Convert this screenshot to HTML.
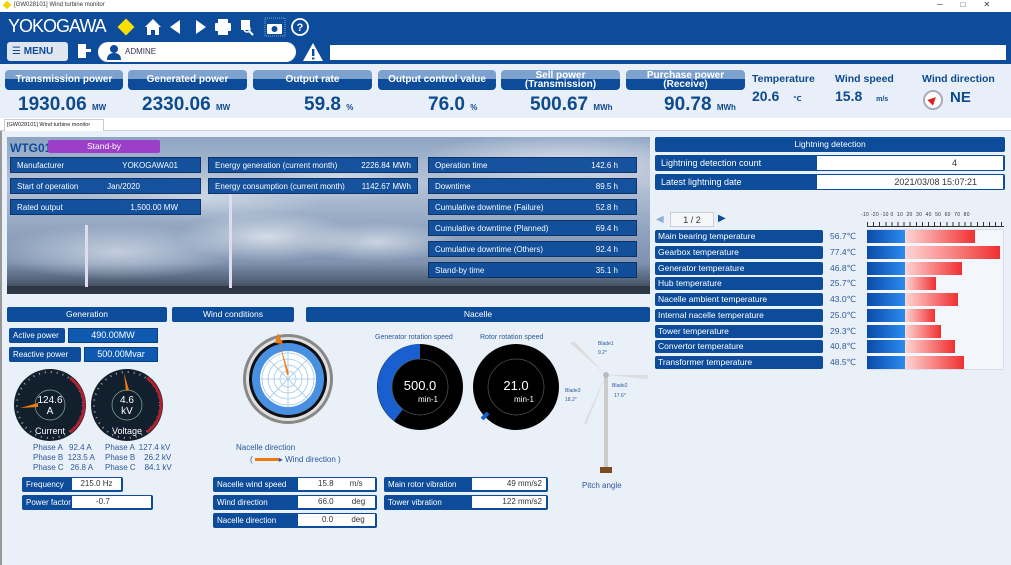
<!DOCTYPE html>
<html><head><meta charset="utf-8"><style>
*{box-sizing:border-box;margin:0;padding:0}
body{width:1011px;height:565px;overflow:hidden;background:#fff;font-family:"Liberation Sans","DejaVu Sans",sans-serif;position:relative;font-size:9px;color:#1a3d7a}
.a{position:absolute}
.hdr{background:#0d4c9a}
.kh{position:absolute;top:70px;height:20px;border-radius:4px;background:linear-gradient(#7ea2cf 0%,#7ea2cf 45%,#0d4c9a 46%);color:#fff;font-weight:bold;font-size:10px;text-align:center;line-height:20px}
.kv{position:absolute;top:94px;font-size:19px;font-weight:bold;color:#0d4a8e;text-align:center}
.kv small{font-size:8px}
.ir{position:absolute;background:#0d4c9a;color:#fff;font-size:8px;height:16px;line-height:16px;padding:0 6px;border:1px solid #082d63;opacity:.95}
.ir span{position:absolute;right:6px}
.sh{position:absolute;height:15px;background:#0d4c9a;color:#fff;font-size:8.5px;text-align:center;line-height:15px;border-radius:2px}
.lr{position:absolute;height:14px;background:#0d4c9a;color:#fff;font-size:8px;line-height:14px;padding-left:4px;border-radius:2px}
.lr b{position:absolute;background:#fff;color:#333;font-weight:normal;top:1px;height:12px;line-height:12px;text-align:center}
.tr{position:absolute;left:655px;width:168px;height:13px;background:#0d4c9a;color:#fff;font-size:8.5px;line-height:13px;padding-left:3px;border-radius:2px}
.tv{position:absolute;left:830px;font-size:8.5px;color:#2c5a99}
.bb{position:absolute;left:867px;width:38px;height:13px;background:linear-gradient(90deg,#0b4aa8,#2a8cf0)}
.rb{position:absolute;left:905px;height:13px;background:linear-gradient(90deg,#ffd6d6,#f03030)}
</style></head><body>
<div class="a" style="left:0;top:0;width:1011px;height:12px;background:#fff;font-size:6px;color:#333;line-height:11px;padding-left:14px">[GW028101] Wind turbine monitor</div>
<div class="a" style="left:4px;top:2px;width:6px;height:6px;background:#f4d400;transform:rotate(45deg)"></div>
<div class="a" style="left:937px;top:0;font-size:8px;color:#333;letter-spacing:18px">─□✕</div>
<div class="a hdr" style="left:0;top:12px;width:1011px;height:52px"></div>
<div class="a" style="left:8px;top:16px;color:#fff;font-size:18px;letter-spacing:-1px">YOKOGAWA</div>
<div class="a" style="left:120px;top:21px;width:12px;height:12px;background:#f8e000;transform:rotate(45deg)"></div>
<svg class="a" style="left:142px;top:16px" width="180" height="22" viewBox="0 0 180 22" fill="#fff">
<path d="M3 11 L11 3 L19 11 L17 11 L17 19 L13 19 L13 14 L9 14 L9 19 L5 19 L5 11Z"/>
<path d="M28 11 L38 4 L38 18Z"/><path d="M54 4 L64 11 L54 18Z"/>
<rect x="76" y="3" width="10" height="4"/><rect x="73" y="7" width="16" height="8" rx="1"/><rect x="76" y="13" width="10" height="6"/>
<rect x="99" y="4" width="9" height="10"/><circle cx="105" cy="13" r="3" fill="none" stroke="#fff" stroke-width="1.5"/><path d="M107 15 L111 19" stroke="#fff" stroke-width="2"/>
<rect x="125" y="8" width="15" height="10" rx="1"/><circle cx="132.5" cy="13" r="3" fill="#0d4c9a"/><rect x="123" y="2" width="20" height="18" fill="none" stroke="#fff" stroke-width=".5" stroke-dasharray="1 1"/>
<circle cx="158" cy="11" r="8" fill="none" stroke="#fff" stroke-width="1.8"/><text x="158" y="15" font-size="11" font-weight="bold" text-anchor="middle" fill="#fff" font-family="Liberation Sans">?</text>
</svg>
<div class="a" style="left:7px;top:42px;width:61px;height:19px;background:#dfe6f0;border-radius:3px;color:#0d4c9a;font-weight:bold;font-size:10px;line-height:19px;padding-left:5px">☰ MENU</div>
<div class="a" style="left:78px;top:44px;width:8px;height:14px;background:#fff"></div><div class="a" style="left:86px;top:49px;width:5px;height:3px;background:#fff"></div>
<div class="a" style="left:98px;top:42px;width:198px;height:20px;background:#fff;border-radius:10px;font-size:8px;color:#335;line-height:20px;padding-left:27px">ADMINE</div>
<svg class="a" style="left:106px;top:44px" width="16" height="16"><circle cx="8" cy="5" r="4" fill="#0d4c9a"/><path d="M1 16 Q1 9 8 9 Q15 9 15 16Z" fill="#0d4c9a"/></svg>
<svg class="a" style="left:302px;top:42px" width="22" height="20"><path d="M11 1 L21 19 L1 19Z" fill="#fff"/><rect x="10" y="7" width="2.4" height="7" fill="#0d4c9a"/><rect x="10" y="15.5" width="2.4" height="2" fill="#0d4c9a"/></svg>
<div class="a" style="left:330px;top:45px;width:676px;height:15px;background:#fff"></div>
<div class="a" style="left:0;top:64px;width:1011px;height:54px;background:#e8eff8"></div>
<div class="kh" style="left:5px;width:118px">Transmission power</div>
<div class="kh" style="left:128px;width:119px">Generated power</div>
<div class="kh" style="left:253px;width:119px">Output rate</div>
<div class="kh" style="left:378px;width:118px">Output control value</div>
<div class="kh" style="left:501px;width:119px;line-height:9px;padding-top:1px">Sell power<br>(Transmission)</div>
<div class="kh" style="left:626px;width:119px;line-height:9px;padding-top:1px">Purchase power<br>(Receive)</div>
<div class="kv" style="left:18px">1930.06 <small>MW</small></div>
<div class="kv" style="left:142px">2330.06 <small>MW</small></div>
<div class="kv" style="left:304px">59.8 <small>%</small></div>
<div class="kv" style="left:428px">76.0 <small>%</small></div>
<div class="kv" style="left:530px">500.67 <small>MWh</small></div>
<div class="kv" style="left:664px">90.78 <small>MWh</small></div>
<div class="a" style="left:752px;top:73px;font-size:10.5px;font-weight:bold;color:#0d4a8e">Temperature</div>
<div class="a" style="left:835px;top:73px;font-size:10.5px;font-weight:bold;color:#0d4a8e">Wind speed</div>
<div class="a" style="left:922px;top:73px;font-size:10.5px;font-weight:bold;color:#0d4a8e">Wind direction</div>
<div class="a" style="left:752px;top:88px;font-size:14px;font-weight:bold;color:#0d4a8e">20.6 <small style="font-size:7px;margin-left:10px">℃</small></div>
<div class="a" style="left:835px;top:88px;font-size:14px;font-weight:bold;color:#0d4a8e">15.8 <small style="font-size:7px;margin-left:10px">m/s</small></div>
<div class="a" style="left:923px;top:90px;width:20px;height:20px;border-radius:50%;border:2px solid #aab;background:#fff"></div>
<div class="a" style="left:929px;top:96px;width:0;height:0;border-left:4px solid transparent;border-right:4px solid transparent;border-bottom:8px solid #e02020;transform:rotate(45deg)"></div>
<div class="a" style="left:950px;top:89px;font-size:15px;font-weight:bold;color:#0d4a8e">NE</div>
<div class="a" style="left:0;top:118px;width:1011px;height:13px;background:#fff;border-bottom:1px solid #ccd"></div>
<div class="a" style="left:4px;top:119px;width:100px;height:12px;background:#fff;border:1px solid #ccc;border-bottom:none;font-size:5.5px;color:#222;line-height:11px;padding-left:2px">[GW028101] Wind turbine monitor</div>
<div class="a" style="left:0;top:131px;width:1011px;height:434px;background:#eaf0f8;border-left:2px solid #999"></div>
<!-- photo -->
<div class="a" style="left:7px;top:137px;width:643px;height:157px;background:linear-gradient(180deg,#8ea4c2 0%,#b5c3d6 30%,#8fa3bf 60%,#7f93b0 80%,#4d5c70 93%,#2d3844 100%)"></div>
<div class="a" style="left:7px;top:137px;width:643px;height:157px;background:radial-gradient(ellipse 90px 25px at 260px 100px,rgba(230,235,242,.8),transparent),radial-gradient(ellipse 120px 28px at 110px 115px,rgba(220,228,238,.7),transparent),radial-gradient(ellipse 80px 20px at 370px 105px,rgba(230,235,242,.7),transparent),radial-gradient(ellipse 150px 30px at 560px 25px,rgba(235,238,245,.7),transparent),radial-gradient(ellipse 120px 25px at 200px 60px,rgba(225,232,242,.6),transparent),radial-gradient(ellipse 90px 25px at 330px 40px,rgba(225,232,242,.6),transparent)"></div>
<div class="a" style="left:7px;top:286px;width:643px;height:8px;background:#2d3844"></div>
<div class="a" style="left:229px;top:190px;width:3px;height:98px;background:#dde"></div>
<div class="a" style="left:85px;top:225px;width:3px;height:62px;background:#dde"></div>
<div class="a" style="left:10px;top:141px;font-size:12px;font-weight:bold;color:#0d4c9a">WTG01</div>
<div class="a" style="left:48px;top:140px;width:112px;height:13px;background:#9b3fc8;border-radius:2px;color:#fff;font-size:8.5px;text-align:center;line-height:13px">Stand-by</div>
<div class="ir" style="left:10px;top:157px;width:191px">Manufacturer<span style="right:22px">YOKOGAWA01</span></div>
<div class="ir" style="left:10px;top:178px;width:191px">Start of operation<span style="right:60px">Jan/2020</span></div>
<div class="ir" style="left:10px;top:199px;width:191px">Rated output<span style="right:22px">1,500.00 MW</span></div>
<div class="ir" style="left:208px;top:157px;width:210px">Energy generation (current month)<span>2226.84 MWh</span></div>
<div class="ir" style="left:208px;top:178px;width:210px">Energy consumption (current month)<span>1142.67 MWh</span></div>
<div class="ir" style="left:428px;top:157px;width:209px">Operation time<span style="right:18px">142.6 h</span></div>
<div class="ir" style="left:428px;top:178px;width:209px">Downtime<span style="right:18px">89.5 h</span></div>
<div class="ir" style="left:428px;top:199px;width:209px">Cumulative downtime (Failure)<span style="right:18px">52.8 h</span></div>
<div class="ir" style="left:428px;top:220px;width:209px">Cumulative downtime (Planned)<span style="right:18px">69.4 h</span></div>
<div class="ir" style="left:428px;top:241px;width:209px">Cumulative downtime (Others)<span style="right:18px">92.4 h</span></div>
<div class="ir" style="left:428px;top:262px;width:209px">Stand-by time<span style="right:18px">35.1 h</span></div>
<!-- right panel -->
<div class="sh" style="left:655px;top:137px;width:350px">Lightning detection</div>
<div class="lr" style="left:655px;top:155px;width:350px;height:16px;line-height:16px;font-size:9px;padding-left:6px">Lightning detection count<b style="left:162px;width:186px;height:14px;text-align:right;padding-right:46px;line-height:14px">4</b></div>
<div class="lr" style="left:655px;top:174px;width:350px;height:16px;line-height:16px;font-size:9px;padding-left:6px">Latest lightning date<b style="left:162px;width:186px;height:14px;text-align:right;padding-right:26px;line-height:14px">2021/03/08 15:07:21</b></div>
<div class="a" style="left:656px;top:214px;color:#8fb0d8;font-size:10px">◀</div>
<div class="a" style="left:670px;top:212px;width:44px;height:15px;background:#f4f6f8;border:1px solid #ccd;font-size:9px;color:#333;text-align:center;line-height:14px">1 / 2</div>
<div class="a" style="left:718px;top:213px;color:#0d4c9a;font-size:10px">▶</div>
<div class="a" style="left:861px;top:212px;font-size:5px;color:#333;letter-spacing:.3px;white-space:nowrap">-10 -20 -10 0 &nbsp;10 &nbsp;20 &nbsp;30 &nbsp;40 &nbsp;50 &nbsp;60 &nbsp;70 &nbsp;80</div>
<div class="a" style="left:867px;top:222px;width:137px;height:5px;border-bottom:1px solid #333;background:repeating-linear-gradient(90deg,#333 0 1px,transparent 1px 6.1px)"></div>
<div class="a" style="left:867px;top:229px;width:137px;height:141px;background:#f3f6fa;border:1px solid #dde"></div>
<div class="tr" style="top:230px">Main bearing temperature</div><div class="tv" style="top:231px">56.7℃</div><div class="bb" style="top:230px"></div><div class="rb" style="top:230px;width:70px"></div>
<div class="tr" style="top:246px">Gearbox temperature</div><div class="tv" style="top:247px">77.4℃</div><div class="bb" style="top:246px"></div><div class="rb" style="top:246px;width:95px"></div>
<div class="tr" style="top:262px">Generator temperature</div><div class="tv" style="top:263px">46.8℃</div><div class="bb" style="top:262px"></div><div class="rb" style="top:262px;width:57px"></div>
<div class="tr" style="top:277px">Hub temperature</div><div class="tv" style="top:278px">25.7℃</div><div class="bb" style="top:277px"></div><div class="rb" style="top:277px;width:31px"></div>
<div class="tr" style="top:293px">Nacelle ambient temperature</div><div class="tv" style="top:294px">43.0℃</div><div class="bb" style="top:293px"></div><div class="rb" style="top:293px;width:53px"></div>
<div class="tr" style="top:309px">Internal nacelle temperature</div><div class="tv" style="top:310px">25.0℃</div><div class="bb" style="top:309px"></div><div class="rb" style="top:309px;width:30px"></div>
<div class="tr" style="top:325px">Tower temperature</div><div class="tv" style="top:326px">29.3℃</div><div class="bb" style="top:325px"></div><div class="rb" style="top:325px;width:36px"></div>
<div class="tr" style="top:340px">Convertor temperature</div><div class="tv" style="top:341px">40.8℃</div><div class="bb" style="top:340px"></div><div class="rb" style="top:340px;width:50px"></div>
<div class="tr" style="top:356px">Transformer temperature</div><div class="tv" style="top:357px">48.5℃</div><div class="bb" style="top:356px"></div><div class="rb" style="top:356px;width:59px"></div>
<!-- generation -->
<div class="sh" style="left:7px;top:307px;width:160px">Generation</div>
<div class="sh" style="left:172px;top:307px;width:122px">Wind conditions</div>
<div class="sh" style="left:306px;top:307px;width:344px">Nacelle</div>
<div class="lr" style="left:9px;top:328px;width:56px;height:15px;line-height:15px">Active power</div>
<div class="a" style="left:68px;top:328px;width:90px;height:15px;background:#0d5ab0;border:1px solid #0a3f80;color:#fff;text-align:center;font-size:9px;line-height:13px">490.00MW</div>
<div class="lr" style="left:9px;top:347px;width:72px;height:15px;line-height:15px">Reactive power</div>
<div class="a" style="left:84px;top:347px;width:74px;height:15px;background:#0d5ab0;border:1px solid #0a3f80;color:#fff;text-align:center;font-size:9px;line-height:13px">500.00Mvar</div>
<svg class="a" style="left:12px;top:365px" width="180" height="80">
<g transform="translate(38,40)"><circle r="36" fill="#12202e"/><circle r="33" fill="none" stroke="#9aa" stroke-width="2" stroke-dasharray="1 5"/><path d="M20 -27 A33 33 0 0 1 20 27" fill="none" stroke="#b02030" stroke-width="3"/><circle r="15" fill="none" stroke="#8a9" stroke-width=".7"/><path d="M-30 3 L-12 -2 L-12 2Z" fill="#f07a10"/><text y="-2" text-anchor="middle" fill="#fff" font-size="10" font-family="Liberation Sans">124.6</text><text y="9" text-anchor="middle" fill="#fff" font-size="10" font-family="Liberation Sans">A</text><text y="29" text-anchor="middle" fill="#fff" font-size="9" font-family="Liberation Sans">Current</text></g>
<g transform="translate(115,40)"><circle r="36" fill="#12202e"/><circle r="33" fill="none" stroke="#9aa" stroke-width="2" stroke-dasharray="1 5"/><path d="M20 -27 A33 33 0 0 1 20 27" fill="none" stroke="#b02030" stroke-width="3"/><circle r="15" fill="none" stroke="#8a9" stroke-width=".7"/><path d="M-3 -32 L-1 -14 L2 -15Z" fill="#f07a10"/><text y="-2" text-anchor="middle" fill="#fff" font-size="10" font-family="Liberation Sans">4.6</text><text y="9" text-anchor="middle" fill="#fff" font-size="10" font-family="Liberation Sans">kV</text><text y="29" text-anchor="middle" fill="#fff" font-size="9" font-family="Liberation Sans">Voltage</text></g>
</svg>
<div class="a" style="left:33px;top:443px;font-size:8px;color:#2c5a99;line-height:10px;white-space:pre">Phase A   92.4 A
Phase B  123.5 A
Phase C   26.8 A</div>
<div class="a" style="left:105px;top:443px;font-size:8px;color:#2c5a99;line-height:10px;white-space:pre">Phase A  127.4 kV
Phase B    26.2 kV
Phase C    84.1 kV</div>
<div class="lr" style="left:22px;top:477px;width:101px;height:15px;line-height:15px">Frequency<b style="left:50px;width:49px">215.0 Hz</b></div>
<div class="lr" style="left:22px;top:495px;width:131px;height:15px;line-height:15px">Power factor<b style="left:50px;width:79px;text-align:left;padding-left:24px">-0.7</b></div>
<!-- compass -->
<svg class="a" style="left:242px;top:333px" width="92" height="92">
<g transform="translate(46,46)"><circle r="45" fill="#888"/><circle r="42" fill="#e0e0e0"/><circle r="39" fill="#111"/><circle r="36" fill="#4a90e2"/><circle r="28" fill="#fff"/>
<g stroke="#9cc6ec" stroke-width=".8" fill="none"><circle r="8"/><circle r="14"/><circle r="20"/><circle r="26"/><path d="M-28 0H28M0 -28V28M-20 -20L20 20M20 -20L-20 20"/></g>
<path d="M-13 -36 L-10 -46 L-5 -35Z M-9 -38 L1 -5 L-1 -4Z" fill="#f07a10"/></g></svg>
<div class="a" style="left:236px;top:443px;font-size:8px;color:#2c5a99">Nacelle direction</div>
<div class="a" style="left:250px;top:455px;font-size:8px;color:#2c5a99">( <span style="display:inline-block;width:24px;height:3px;background:#f07a10;vertical-align:middle"></span>▸ Wind direction )</div>
<div class="lr" style="left:213px;top:477px;width:164px;height:15px;line-height:15px">Nacelle wind speed<b style="left:85px;width:77px;text-align:left;padding-left:20px">15.8 <span style="margin-left:14px">m/s</span></b></div>
<div class="lr" style="left:213px;top:495px;width:164px;height:15px;line-height:15px">Wind direction<b style="left:85px;width:77px;text-align:left;padding-left:20px">66.0 <span style="margin-left:16px">deg</span></b></div>
<div class="lr" style="left:213px;top:513px;width:164px;height:15px;line-height:15px">Nacelle direction<b style="left:85px;width:77px;text-align:left;padding-left:24px">0.0 <span style="margin-left:16px">deg</span></b></div>
<div class="a" style="left:375px;top:334px;font-size:7px;color:#2c5a99">Generator rotation speed</div>
<div class="a" style="left:480px;top:334px;font-size:7px;color:#2c5a99">Rotor rotation speed</div>
<svg class="a" style="left:376px;top:343px" width="200" height="90">
<g transform="translate(44,44)"><circle r="43" fill="#000"/><path d="M0 0 L0 -43 A43 43 0 0 0 -26 34Z" fill="#1a5fd0"/><circle r="28" fill="#000" stroke="#555" stroke-width=".7"/><text y="3" text-anchor="middle" fill="#fff" font-size="13" font-family="Liberation Sans">500.0</text><text x="8" y="15" text-anchor="middle" fill="#fff" font-size="8" font-family="Liberation Sans">min-1</text></g>
<g transform="translate(140,44)"><circle r="43" fill="#000"/><path d="M-28 26 L-34 32" stroke="#1a5fd0" stroke-width="4"/><circle r="28" fill="#000" stroke="#555" stroke-width=".7"/><text y="3" text-anchor="middle" fill="#fff" font-size="13" font-family="Liberation Sans">21.0</text><text x="8" y="15" text-anchor="middle" fill="#fff" font-size="8" font-family="Liberation Sans">min-1</text></g>
</svg>
<svg class="a" style="left:560px;top:335px" width="90" height="145">
<rect x="44" y="40" width="4" height="95" fill="#ccc"/><rect x="40" y="132" width="12" height="6" fill="#7a4a20"/>
<path d="M46 40 L10 8 L14 6Z M46 40 L88 40 L88 44Z M46 40 L26 90 L24 88Z" fill="#ddd"/><circle cx="46" cy="40" r="3" fill="#bbb"/>
<text x="38" y="10" font-size="5" fill="#2c5a99">Blade1</text><text x="38" y="19" font-size="5" fill="#2c5a99">9.2°</text>
<text x="52" y="52" font-size="5" fill="#2c5a99">Blade2</text><text x="54" y="62" font-size="5" fill="#2c5a99">17.6°</text>
<text x="5" y="57" font-size="5" fill="#2c5a99">Blade3</text><text x="5" y="66" font-size="5" fill="#2c5a99">18.2°</text></svg>
<div class="a" style="left:582px;top:481px;font-size:8px;color:#2c5a99">Pitch angle</div>
<div class="lr" style="left:384px;top:477px;width:164px;height:15px;line-height:15px">Main rotor vibration<b style="left:88px;width:74px;text-align:right;padding-right:4px">49 mm/s2</b></div>
<div class="lr" style="left:384px;top:495px;width:164px;height:15px;line-height:15px">Tower vibration<b style="left:88px;width:74px;text-align:right;padding-right:4px">122 mm/s2</b></div>
</body></html>
